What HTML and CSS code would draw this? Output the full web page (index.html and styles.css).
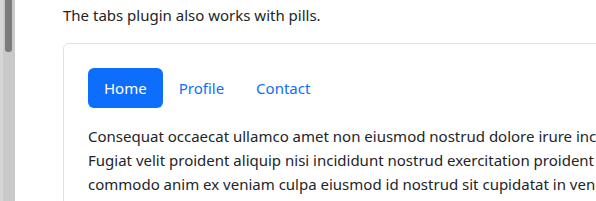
FILE: index.html
```html
<!DOCTYPE html>
<html lang="en">
<head>
    <meta charset="UTF-8">
    <title>Pills</title>
    <link rel="stylesheet" href="styles.css">
</head>
<body>
    <div class="page">
        <div class="scrollbar">
            <div class="scrollbar-thumb"></div>
        </div>

        <main class="content">
            <p class="lead-text">The tabs plugin also works with pills.</p>

            <div class="example">
                <ul class="nav-pills">
                    <li><a href="#" class="active">Home</a></li>
                    <li><a href="#">Profile</a></li>
                    <li><a href="#">Contact</a></li>
                </ul>

                <p class="tab-text">
                    Consequat occaecat ullamco amet non eiusmod nostrud dolore irure incididunt est duis anim sunt officia.<br>
                    Fugiat velit proident aliquip nisi incididunt nostrud exercitation proident est nisi.<br>
                    commodo anim ex veniam culpa eiusmod id nostrud sit cupidatat in veniam ad.
                </p>
            </div>
        </main>
    </div>
</body>
</html>
```

FILE: styles.css
```css
body {
  margin: 0;
  padding: 0;
  background: #fff;
  font-family: "Noto Sans", sans-serif;
  font-size: 15px;
  line-height: 24px;
  color: #212529;
  overflow: hidden;
}

.page {
  display: flex;
  height: 201px;
}

.scrollbar {
  box-sizing: border-box;
  flex: 0 0 15px;
  background-color: #c9c9c9;
  border-left: 3px solid #d6d6d6;
  padding-left: 2px;
}

.scrollbar-thumb {
  width: 7px;
  height: 52px;
  background-color: #7b7b7b;
  border-radius: 0 0 3px 3px;
}

.content {
  flex: 1;
  padding-left: 48px;
  min-width: 0;
}

.lead-text {
  margin: 3px 0 16px;
  white-space: nowrap;
}

.example {
  width: 900px;
  border: 1px solid #dee2e6;
  border-radius: 6px 0 0 6px;
  padding: 24px;
}

.nav-pills {
  display: flex;
  list-style: none;
  margin: 0 0 16px;
  padding: 0;
}

.nav-pills a {
  display: block;
  padding: 8px 16px;
  color: #0d6efd;
  text-decoration: none;
  border-radius: 6px;
}

.nav-pills a.active {
  background-color: #0d6efd;
  color: #fff;
}

.tab-text {
  margin: 0;
  white-space: nowrap;
}
```
